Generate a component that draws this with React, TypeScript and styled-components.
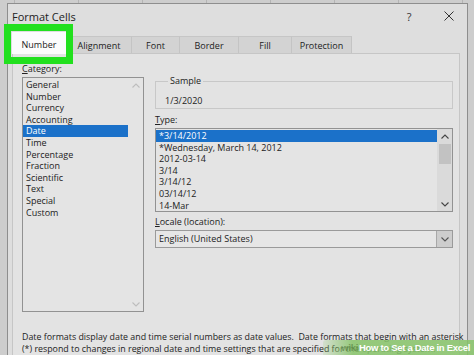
import React from 'react';
import styled, { createGlobalStyle } from 'styled-components';

const GlobalStyle = createGlobalStyle`
  html, body {
    margin: 0;
    padding: 0;
  }
  body {
    background: #cbcbcb;
    font-family: "Open Sans", "Noto Sans", sans-serif;
    color: #1f1f1f;
  }
`;

const categories = [
  'General', 'Number', 'Currency', 'Accounting', 'Date', 'Time',
  'Percentage', 'Fraction', 'Scientific', 'Text', 'Special', 'Custom',
];

const types = [
  '*3/14/2012', '*Wednesday, March 14, 2012', '2012-03-14', '3/14',
  '3/14/12', '03/14/12', '14-Mar',
];

const tabs = [
  { label: 'Number', w: 55 },
  { label: 'Alignment', w: 65 },
  { label: 'Font', w: 48 },
  { label: 'Border', w: 59 },
  { label: 'Fill', w: 53 },
  { label: 'Protection', w: 60 },
];

const Page = styled.div`
  position: relative;
  width: 474px;
  height: 355px;
  overflow: hidden;
  box-sizing: border-box;
  padding: 3px 6px 0 7px;
  background-color: #cdcdcd;
  background-image: repeating-linear-gradient(
    90deg,
    transparent 0,
    transparent 14px,
    #b4b4b4 14px,
    #b4b4b4 15px,
    transparent 15px,
    transparent 64px
  );
`;

const Dialog = styled.div`
  height: 100%;
  box-sizing: border-box;
  background: #dedede;
  border: 1px solid #8e8e8e;
  border-bottom: none;
  display: flex;
  flex-direction: column;
`;

const TitleBar = styled.div`
  height: 24px;
  display: flex;
  align-items: center;
  padding: 0 3px 0 4px;
`;

const Title = styled.div`
  flex: 1;
  font-size: 11px;
  color: #222;
`;

const TitleButton = styled.div`
  width: 30px;
  height: 24px;
  display: flex;
  align-items: center;
  justify-content: center;
  font-size: 11px;
  color: #333;
  & + & {
    margin-left: 10px;
  }
`;

const TabRow = styled.div`
  display: flex;
  align-items: flex-end;
  height: 21px;
  margin-top: 4px;
  padding-left: 4px;
  position: relative;
  z-index: 1;
`;

const Tab = styled.div<{ $active?: boolean; $w: number }>`
  width: ${p => p.$w}px;
  box-sizing: border-box;
  height: ${p => (p.$active ? 22 : 17)}px;
  margin-bottom: ${p => (p.$active ? -1 : 0)}px;
  padding-top: ${p => (p.$active ? 2 : 0)}px;
  display: flex;
  align-items: center;
  justify-content: center;
  font-size: 9px;
  color: #222;
  background: ${p => (p.$active ? '#fcfcfc' : '#d3d3d3')};
  border-top: 1px solid ${p => (p.$active ? '#fcfcfc' : '#c6c6c6')};
  border-right: 1px solid #c4c4c4;
`;

const Panel = styled.div`
  flex: 1;
  margin: 0 7px 0 4px;
  border: 1px solid #c6c6c6;
  border-bottom: none;
  background: #e3e3e3;
  padding: 9px 6px 0 9px;
`;

const Columns = styled.div`
  display: grid;
  grid-template-columns: 122px 1fr;
  column-gap: 11px;
`;

const Column = styled.div`
  display: flex;
  flex-direction: column;
`;

const Label = styled.div<{ $gap?: number }>`
  font-size: 9px;
  line-height: 12px;
  margin-top: ${p => p.$gap ?? 0}px;
  margin-bottom: 2px;
  color: #222;
`;

const ListBox = styled.div<{ $h: number }>`
  height: ${p => p.$h}px;
  box-sizing: border-box;
  border: 1px solid #929292;
  background: #e4e4e4;
  display: flex;
`;

const Items = styled.div`
  flex: 1;
  padding-top: 1px;
`;

const Item = styled.div<{ $selected?: boolean }>`
  height: 11.6px;
  line-height: 11.6px;
  padding-left: 3px;
  font-size: 9px;
  white-space: nowrap;
  color: ${p => (p.$selected ? '#fff' : '#222')};
  background: ${p => (p.$selected ? '#1b71c9' : 'transparent')};
`;

const ScrollBar = styled.div<{ $enabled?: boolean }>`
  width: 15px;
  display: flex;
  flex-direction: column;
  align-items: center;
  background: ${p => (p.$enabled ? '#dadada' : '#e4e4e4')};
`;

const Arrow = styled.div`
  height: 14px;
  display: flex;
  align-items: center;
  justify-content: center;
`;

const Track = styled.div`
  flex: 1;
  width: 100%;
  display: flex;
  justify-content: center;
`;

const Thumb = styled.div`
  width: 12px;
  height: 20px;
  margin-top: 1px;
  background: #c2c2c2;
`;

const Group = styled.fieldset`
  margin: 12px 0 0;
  padding: 8px 9px 1px;
  border: 1px solid #c8c8c8;
  min-width: 0;
`;

const Legend = styled.legend`
  font-size: 9px;
  line-height: 12px;
  padding: 0 2px;
  margin-left: 3px;
  color: #222;
`;

const Value = styled.div`
  font-size: 9px;
  line-height: 12px;
  color: #222;
`;

const Combo = styled.div`
  height: 18px;
  box-sizing: border-box;
  border: 1px solid #9a9a9a;
  background: #e6e6e6;
  display: flex;
  align-items: stretch;
`;

const ComboText = styled.div`
  flex: 1;
  font-size: 9px;
  line-height: 16px;
  padding-left: 3px;
  color: #222;
`;

const ComboButton = styled.div`
  width: 15px;
  background: #cdcdcd;
  border-left: 1px solid #a8a8a8;
  display: flex;
  align-items: center;
  justify-content: center;
`;

const Footer = styled.div`
  margin-top: 20px;
  font-size: 8.85px;
  line-height: 11.6px;
  white-space: pre;
  color: #222;
`;

const Highlight = styled.div`
  position: absolute;
  left: 4px;
  top: 24px;
  width: 69px;
  height: 40px;
  box-sizing: border-box;
  border: 7px solid #22e01e;
  z-index: 5;
  pointer-events: none;
`;

const Watermark = styled.div`
  position: absolute;
  right: 0;
  bottom: 0;
  width: 151px;
  height: 15px;
  display: flex;
  align-items: center;
  justify-content: flex-end;
  padding-right: 4px;
  box-sizing: border-box;
  background: linear-gradient(90deg, rgba(150, 205, 120, 0.2) 0, rgba(135, 196, 105, 0.85) 30px);
  border-top-left-radius: 3px;
  font-family: "Liberation Sans", Arial, sans-serif;
  font-weight: bold;
  font-size: 9.5px;
  letter-spacing: -0.3px;
  color: #fff;
  z-index: 6;
`;

const Wiki = styled.span`
  color: rgba(70, 110, 50, 0.55);
  margin-right: 1px;
`;

const Chevron = ({ up, color }: { up?: boolean; color: string }) => (
  <svg width="8" height="5" viewBox="0 0 8 5">
    <polyline
      points={up ? '0.5,4.5 4,1 7.5,4.5' : '0.5,0.5 4,4 7.5,0.5'}
      fill="none"
      stroke={color}
      strokeWidth="1.1"
    />
  </svg>
);

const CloseIcon = () => (
  <svg width="10" height="10" viewBox="0 0 10 10">
    <path d="M0.5 0.5 L9.5 9.5 M9.5 0.5 L0.5 9.5" stroke="#333" strokeWidth="1" />
  </svg>
);

export default function App() {
  return (
    <>
      <GlobalStyle />
      <Page>
        <Dialog>
          <TitleBar>
            <Title>Format Cells</Title>
            <TitleButton>?</TitleButton>
            <TitleButton>
              <CloseIcon />
            </TitleButton>
          </TitleBar>
          <TabRow>
            {tabs.map((t, i) => (
              <Tab key={t.label} $w={t.w} $active={i === 0}>
                {t.label}
              </Tab>
            ))}
          </TabRow>
          <Panel>
            <Columns>
              <Column>
                <Label>
                  <u>C</u>ategory:
                </Label>
                <ListBox $h={235}>
                  <Items>
                    {categories.map(c => (
                      <Item key={c} $selected={c === 'Date'}>
                        {c}
                      </Item>
                    ))}
                  </Items>
                  <ScrollBar>
                    <Arrow>
                      <Chevron up color="#bdbdbd" />
                    </Arrow>
                    <Track />
                    <Arrow>
                      <Chevron color="#bdbdbd" />
                    </Arrow>
                  </ScrollBar>
                </ListBox>
              </Column>
              <Column>
                <Group>
                  <Legend>Sample</Legend>
                  <Value>1/3/2020</Value>
                </Group>
                <Label $gap={5}>
                  <u>T</u>ype:
                </Label>
                <ListBox $h={84}>
                  <Items>
                    {types.map((t, i) => (
                      <Item key={t} $selected={i === 0}>
                        {t}
                      </Item>
                    ))}
                  </Items>
                  <ScrollBar $enabled>
                    <Arrow>
                      <Chevron up color="#444" />
                    </Arrow>
                    <Track>
                      <Thumb />
                    </Track>
                    <Arrow>
                      <Chevron color="#444" />
                    </Arrow>
                  </ScrollBar>
                </ListBox>
                <Label $gap={4}>
                  <u>L</u>ocale (location):
                </Label>
                <Combo>
                  <ComboText>English (United States)</ComboText>
                  <ComboButton>
                    <Chevron color="#555" />
                  </ComboButton>
                </Combo>
              </Column>
            </Columns>
            <Footer>
              {'Date formats display date and time serial numbers as date values.  Date formats that begin with an asterisk\n(*) respond to changes in regional date and time settings that are specified for the operating system.'}
            </Footer>
          </Panel>
        </Dialog>
        <Highlight />
        <Watermark>
          <Wiki>wiki</Wiki>How to Set a Date in Excel
        </Watermark>
      </Page>
    </>
  );
}
